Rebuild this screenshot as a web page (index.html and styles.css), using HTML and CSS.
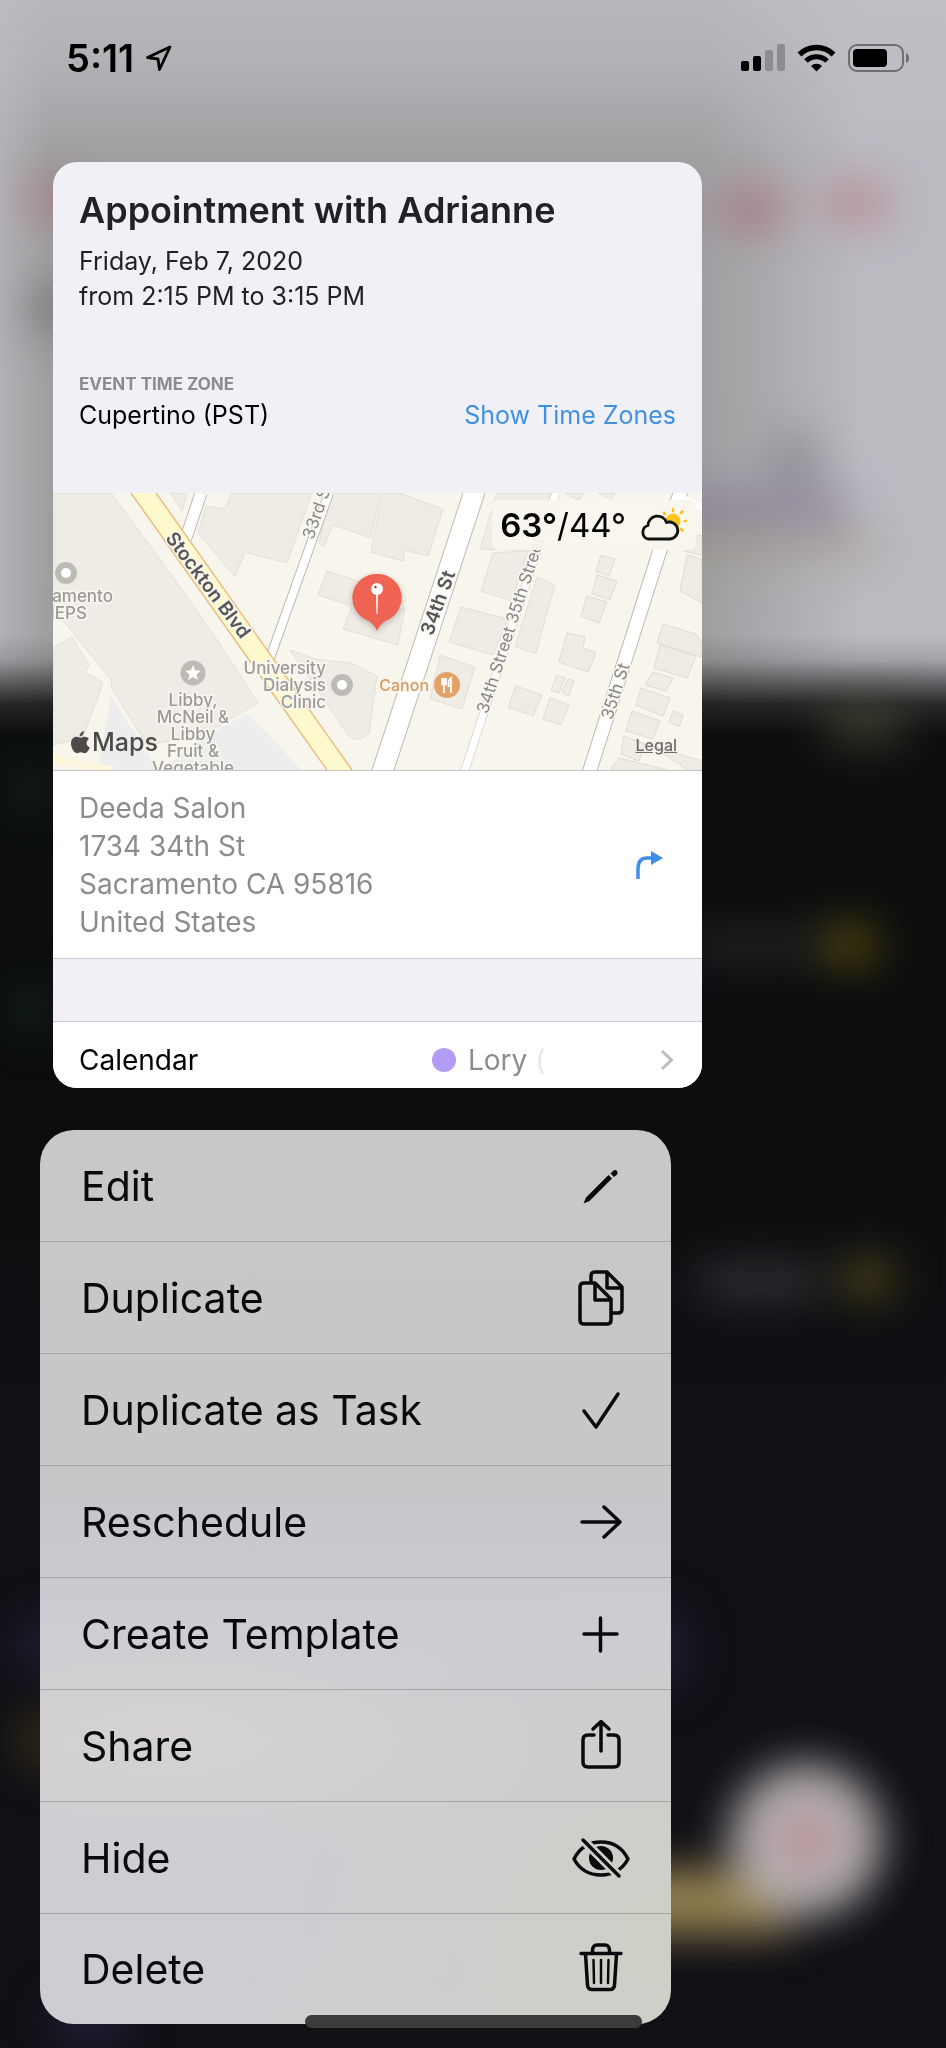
FILE: index.html
```html
<!DOCTYPE html>
<html lang="en">
<head>
    <meta charset="UTF-8">
    <meta name="viewport" content="width=device-width, initial-scale=1.0">
    <title>Appointment with Adrianne</title>
    <link rel="stylesheet" href="styles.css">
</head>
<body>
    <!-- blurred calendar behind the sheet -->
    <svg class="backdrop" viewBox="0 0 946 2048" preserveAspectRatio="xMidYMin slice" aria-hidden="true">
        <filter id="soft" x="-200" y="-200" width="1346" height="2448" filterUnits="userSpaceOnUse" color-interpolation-filters="sRGB">
            <feGaussianBlur stdDeviation="22"/>
        </filter>
        <g filter="url(#soft)">
            <ellipse cx="58" cy="200" rx="34" ry="22" fill="#a8505a" opacity="0.4"/>
            <ellipse cx="753" cy="209" rx="34" ry="24" fill="#a4414e" opacity="0.42"/>
            <ellipse cx="857" cy="203" rx="36" ry="24" fill="#b0455a" opacity="0.36"/>
            <ellipse cx="55" cy="308" rx="26" ry="26" fill="#4a4a4c" opacity="0.5"/>
            <ellipse cx="795" cy="460" rx="28" ry="28" fill="#66656c" opacity="0.45"/>
            <rect x="600" y="492" width="250" height="34" fill="#7d6c90" opacity="0.6"/>
            <rect x="600" y="534" width="280" height="26" fill="#9c9074" opacity="0.5"/>
            <ellipse cx="865" cy="722" rx="44" ry="22" fill="#4a4836" opacity="0.8"/>
            <rect x="690" y="936" width="130" height="20" fill="#3c3c40" opacity="0.7"/>
            <ellipse cx="850" cy="945" rx="30" ry="22" fill="#5c5010" opacity="0.9"/>
            <rect x="700" y="1268" width="120" height="28" fill="#4c4c50" opacity="0.7"/>
            <ellipse cx="868" cy="1278" rx="28" ry="20" fill="#58501a" opacity="0.9"/>
            <ellipse cx="30" cy="790" rx="20" ry="20" fill="#143225" opacity="0.6"/>
            <ellipse cx="30" cy="1010" rx="20" ry="26" fill="#143225" opacity="0.6"/>
            <ellipse cx="45" cy="1645" rx="26" ry="26" fill="#2a2446" opacity="0.8"/>
            <ellipse cx="45" cy="1740" rx="24" ry="26" fill="#4a3e1a" opacity="0.8"/>
            <ellipse cx="90" cy="2020" rx="40" ry="20" fill="#2d2850" opacity="0.8"/>
            <ellipse cx="664" cy="1650" rx="24" ry="40" fill="#26223e" opacity="0.8"/>
            <rect x="500" y="1870" width="290" height="64" fill="#978452"/>
            <circle cx="806" cy="1840" r="76" fill="#b4afb2"/>
            <circle cx="806" cy="1840" r="24" fill="#c8606a" opacity="0.5"/>
        </g>
    </svg>

    <header class="status-bar">
        <div class="status-time">
            <span>5:11</span>
            <svg width="28" height="28" viewBox="0 0 28 28" aria-hidden="true">
                <path d="M25 3 L2.500 13.500 L13 15 L14.500 25.500 Z" fill="none" stroke="#000" stroke-width="2.800" stroke-linejoin="round"/>
            </svg>
        </div>
        <div class="status-icons">
            <svg width="44" height="28" viewBox="0 0 44 28" aria-hidden="true">
                <rect x="0" y="17" width="8" height="10" rx="2"/>
                <rect x="12" y="12" width="8" height="15" rx="2"/>
                <rect x="24" y="6" width="8" height="21" rx="2" fill="#8d8c91"/>
                <rect x="36" y="0" width="8" height="27" rx="2" fill="#8d8c91"/>
            </svg>
            <svg width="39" height="28" viewBox="0 0 39 28" aria-hidden="true">
                <path d="M2.500 10.500 A24 24 0 0 1 36.500 10.500" fill="none" stroke="#000" stroke-width="5.500"/>
                <path d="M9 17 A15 15 0 0 1 30 17" fill="none" stroke="#000" stroke-width="5"/>
                <path d="M19.500 27.500 L14 22 A8 8 0 0 1 25 22 Z"/>
            </svg>
            <svg width="62" height="28" viewBox="0 0 62 28" aria-hidden="true">
                <rect x="1" y="1" width="54" height="26" rx="8" fill="none" stroke="#6f6e73" stroke-width="2"/>
                <rect x="5" y="5" width="34" height="18" rx="4"/>
                <path d="M58 9 Q61 10 61 14 T58 19 Z" fill="#6f6e73"/>
            </svg>
        </div>
    </header>

    <main>
        <article class="event-card">
            <section class="event-head">
                <h1>Appointment with Adrianne</h1>
                <p class="event-date">Friday, Feb 7, 2020<br>from 2:15 PM to 3:15 PM</p>
                <h2>EVENT TIME ZONE</h2>
                <div class="zone-row">
                    <span>Cupertino (PST)</span>
                    <a href="#zones">Show Time Zones</a>
                </div>
            </section>

            <section class="map">
                <svg class="map-art" viewBox="0 0 649 277" preserveAspectRatio="xMidYMid slice">
                    <rect width="649" height="277" fill="#f8f5ed"/>

                    <!-- city blocks -->
                    <g fill="#efece5" stroke="#e3e0d8" stroke-width="1">
                        <path d="M0 0 H58 L120 84 L167 151 L205 210 L150 242 L94 252 L58 194 L59 188 L12 130 L0 116 Z"/>
                        <path d="M0 155 L19 144 L36 172 L32 179 L50 190 L30 244 L0 252 Z"/>
                        <path d="M117 0 H134 L129 18 Z"/>
                        <path d="M178 0 L172 16 L153 13 L145 40 L164 62 L182 84 L192 59 L234 70 L259 0 Z"/>
                        <path d="M277 0 H327 L318 45 L280 32 L271 53 L266 50 Z"/>
                        <path d="M274 78 L324 94 L314 118 L265 102 Z"/>
                        <path d="M299 113 L330 124 L352 114 L345 152 L290 136 Z"/>
                        <path d="M329 0 H346 L390 16 L375 63 L352 57 L350 68 L318 59 Z"/>
                        <path d="M237 157 L262 166 L298 170 L324 183 L316 240 Q305 252 295 242 Z"/>
                        <path d="M444 0 H498 L478 58 L427 56 Z"/>
                        <path d="M440 60 L475 58 L459 108 L428 98 Z"/>
                        <path d="M408 114 L455 126 L440 162 L396 149 Z"/>
                        <path d="M387 162 L422 174 L409 216 L377 206 Z"/>
                        <path d="M484 84 L502 92 L490 134 L483 160 L462 154 Z"/>
                    </g>
                    <g fill="#efece5" stroke="#dfdcd3" stroke-width="1">
                        <path d="M548 62 L562 66 L556 83 L543 78 Z"/>
                        <path d="M544 82 L564 88 L557 107 L539 101 Z"/>
                        <path d="M534 103 L554 109 L546 130 L528 123 Z"/>
                        <path d="M514 140 L532 144 L530 155 L543 160 L535 179 L506 169 Z"/>
                        <path d="M504 182 L512 185 L506 200 L498 197 Z"/>
                        <path d="M515 186 L521 188 L516 203 L509 200 Z"/>
                        <path d="M463 193 L489 202 L480 223 L455 214 Z"/>
                        <path d="M497 205 L516 212 L508 232 L490 226 Z"/>
                        <path d="M610 131 L643 141 L649 150 V164 L604 150 Z"/>
                        <path d="M607 152 L643 163 L634 185 L601 175 Z"/>
                        <path d="M600 179 L620 185 L613 198 L592 192 Z"/>
                        <path d="M588 195 L617 205 L610 223 L583 212 Z"/>
                        <path d="M579 218 L607 228 L600 246 L573 238 Z"/>
                        <path d="M620 218 L630 222 L626 234 L616 229 Z"/>
                        <path d="M571 243 L592 251 L586 268 L568 261 Z"/>
                        <path d="M566 265 L615 277 H557 Z"/>
                        <path d="M597 252 L649 268 V277 H635 Z"/>
                        <path d="M645 42 L649 43 V62 L631 58 Z"/>
                        <path d="M634 62 L649 66 V110 L627 98 Z"/>
                        <path d="M512 0 H530 L526 7 Z"/>
                        <path d="M545 0 H562 L558 6 Z"/>
                    </g>
                    <path d="M58 203 L88 250 L105 277 H45 Z M140 250 L194 221 L215 240 L248 277 H110 Z" fill="#eeedee"/>
                    <path d="M0 266 L30 272 L60 277" stroke="#fbf6dc" stroke-width="8" fill="none"/>

                    <!-- streets -->
                    <g stroke="#bdbab5">
                        <path d="M127 55 L134 42 L148 0" stroke-width="13"/>
                        <path d="M217 165 L276 0" stroke-width="10"/>
                        <path d="M329 280 L422 -3" stroke-width="22"/>
                        <path d="M536 280 L607 57 L629 -5" stroke-width="15"/>
                    </g>
                    <path d="M411 280 L503 0" stroke="#dedbd4" stroke-width="9"/>
                    <path d="M411 280 L503 0" stroke="#fff" stroke-width="7"/>
                    <g stroke="#fff">
                        <path d="M127 57 L134 42 L148 0" stroke-width="11"/>
                        <path d="M217 165 L276 0" stroke-width="8"/>
                        <path d="M329 280 L422 -3" stroke-width="20"/>
                        <path d="M536 280 L607 57 L629 -5" stroke-width="13"/>
                        <path d="M629 6 L649 14" stroke-width="8"/>
                    </g>
                    <path d="M78 0 H103 L299 277 H274 Z" fill="#fdf9cc"/>
                    <path d="M78 0 L274 277 M103 0 L299 277" stroke="#e9bd86" stroke-width="1.500"/>

                    <!-- street names -->
                    <g class="street major">
                        <text transform="translate(150 96) rotate(53)">Stockton Blvd</text>
                        <text transform="translate(391 112) rotate(-70)">34th St</text>
                    </g>
                    <g class="street">
                        <text transform="translate(269 22) rotate(-71)">33rd S</text>
                        <text transform="translate(463 134) rotate(-72)">34th Street 35th Street</text>
                        <text transform="translate(568 200) rotate(-72)">35th St</text>
                    </g>

                    <!-- places -->
                    <g class="poi end">
                        <text x="60" y="109">Sacramento</text>
                        <text x="34" y="126">MEPS</text>
                        <text x="273" y="181">University</text>
                        <text x="273" y="198">Dialysis</text>
                        <text x="273" y="215">Clinic</text>
                    </g>
                    <g class="poi middle">
                        <text x="140" y="213">Libby,</text>
                        <text x="140" y="230">McNeil &amp;</text>
                        <text x="140" y="247">Libby</text>
                        <text x="140" y="264">Fruit &amp;</text>
                        <text x="140" y="281">Vegetable</text>
                    </g>
                    <g class="poi end food">
                        <text x="376" y="198">Canon</text>
                    </g>
                    <g fill="#fff" stroke="#bebbb6" stroke-width="6">
                        <circle cx="13" cy="80" r="8"/>
                        <circle cx="289" cy="192" r="8"/>
                    </g>
                    <circle cx="140" cy="180" r="12.500" fill="#bebbb6"/>
                    <path d="M140 172 L142.200 177.300 L147.800 177.700 L143.500 181.400 L144.800 187 L140 184 L135.200 187 L136.500 181.400 L132.200 177.700 L137.800 177.300 Z" fill="#fff"/>
                    <circle cx="394" cy="192" r="13" fill="#e4a268"/>
                    <path d="M389 185 V190 Q389 192 391 192 T393 190 V185 M391 185 V200 M398 200 V185 Q395 187 395.500 193 H398" fill="none" stroke="#fff" stroke-width="1.800"/>

                    <!-- dropped pin -->
                    <path class="pin" d="M324 81 A24 24 0 0 1 333 127.500 Q327 131 324 138 Q321 131 315 127.500 A24 24 0 0 1 324 81 Z"/>
                    <circle cx="324" cy="96" r="6" fill="#fff"/>
                    <path d="M323 101 H325 L324.500 121 H323.500 Z" fill="#fff"/>
                    <circle cx="322.500" cy="94" r="1.200" fill="#a33"/>
                </svg>

                <div class="weather">
                    <span><b>63°</b>/44°</span>
                    <svg width="48" height="36" viewBox="0 0 48 36" aria-hidden="true">
                        <g stroke="#f8c61c" stroke-width="2.600" stroke-linecap="round">
                            <path d="M33 2 V4 M24 6 L25 7 M41 6 L42.500 4.500 M44.500 14 H46 M41 22 L42.500 23.500"/>
                        </g>
                        <circle cx="33" cy="14" r="7.500" fill="#f8c61c"/>
                        <path d="M8 32 A7 7 0 0 1 8 18.500 A9.500 9.500 0 0 1 26.500 15.500 A8.500 8.500 0 1 1 30 32 Z" fill="#f8f5ed" stroke="#111" stroke-width="2.800" stroke-linejoin="round"/>
                    </svg>
                </div>
                <div class="map-brand">
                    <svg width="19" height="23" viewBox="0 0 19 23" aria-hidden="true">
                        <path d="M13 0 C13 3 11 5.500 8.700 5.400 C8.500 3 10.600 .500 13 0 Z M9.500 6.800 C10.800 6.800 11.700 5.700 13.600 5.700 C15.500 5.700 17 6.600 17.900 8 C14.500 10 15 15 18.800 16.300 C17.800 19.200 15.900 22.200 13.900 22.200 C12.300 22.200 11.800 21.300 9.900 21.300 C8 21.300 7.300 22.200 5.900 22.200 C3.300 22.200 0 17 0 12.600 C0 8.300 2.700 5.800 5.400 5.800 C7.200 5.800 8.400 6.800 9.500 6.800 Z" fill="#4c4b49"/>
                    </svg>
                    <span>Maps</span>
                </div>
                <a class="legal" href="#legal">Legal</a>
            </section>

            <section class="location">
                <address>
                    Deeda Salon<br>
                    1734 34th St<br>
                    Sacramento CA 95816<br>
                    United States
                </address>
                <button class="directions" type="button" aria-label="Directions">
                    <svg width="28" height="30" viewBox="0 0 28 30" aria-hidden="true">
                        <path d="M3 29 V19 Q3 8 12 8 H17" fill="none" stroke="#3f8fe8" stroke-width="3.500"/>
                        <path d="M16 1 L28 8 L16 15 Z" fill="#3f8fe8"/>
                    </svg>
                </button>
            </section>

            <a class="calendar-row" href="#calendar">
                <span>Calendar</span>
                <span class="calendar-value">
                    <i class="dot"></i>
                    <span>Lory <span class="faded">(</span></span>
                </span>
                <svg width="14" height="22" viewBox="0 0 14 22" aria-hidden="true">
                    <path d="M2 2 L11.500 11 L2 20" fill="none" stroke="#bdbdc1" stroke-width="3"/>
                </svg>
            </a>
        </article>

        <nav class="menu">
            <button type="button">
                <span>Edit</span>
                <svg viewBox="0 0 60 60" aria-hidden="true">
                    <g fill="#0a0a0c">
                        <path d="M12.500 47.500 L15 41.500 L37.500 19 L41 22.500 L18.500 45 Z"/>
                        <path d="M39.500 17.500 L42.500 14.500 Q44.500 13.500 46 15 T46 18.500 L43 21 Z"/>
                    </g>
                </svg>
            </button>
            <button type="button">
                <span>Duplicate</span>
                <svg viewBox="0 0 60 60" aria-hidden="true">
                    <g class="line">
                        <path d="M13 15 H24 L40 31 V52 Q40 56 36 56 H13 Q9 56 9 52 V19 Q9 15 13 15 Z M24 15 V32 H40"/>
                        <path d="M20 14 V8 Q20 4 24 4 H36 L51 19 V41 Q51 45 47 45 H41 M36 4 V20 H51"/>
                    </g>
                </svg>
            </button>
            <button type="button">
                <span>Duplicate as Task</span>
                <svg viewBox="0 0 60 60" aria-hidden="true">
                    <path class="line" d="M13 31 L25 47 L47 14"/>
                </svg>
            </button>
            <button type="button">
                <span>Reschedule</span>
                <svg viewBox="0 0 60 60" aria-hidden="true">
                    <path class="line" d="M11 30 H49 M33 15 L49 30 L33 45"/>
                </svg>
            </button>
            <button type="button">
                <span>Create Template</span>
                <svg viewBox="0 0 60 60" aria-hidden="true">
                    <path class="line" d="M13 30 H46 M29.500 14 V47"/>
                </svg>
            </button>
            <button type="button">
                <span>Share</span>
                <svg viewBox="0 0 60 60" aria-hidden="true">
                    <path class="line" d="M23 19 H17 Q12 19 12 24 V46 Q12 51 17 51 H43 Q48 51 48 46 V24 Q48 19 43 19 H37 M30 35 V6 M22 13 L30 5.500 L38 13"/>
                </svg>
            </button>
            <button type="button">
                <span>Hide</span>
                <svg viewBox="0 0 60 60" aria-hidden="true">
                    <mask id="slash">
                        <rect width="60" height="60" fill="#fff"/>
                        <path d="M7 7 L53 53" stroke="#000" stroke-width="9"/>
                    </mask>
                    <g mask="url(#slash)">
                        <path class="line" d="M3 31 C9 19 19 14 30 14 S51 19 57 31 C51 42 41 47 30 47 S9 42 3 31 Z"/>
                        <circle cx="30" cy="30" r="12" fill="#0a0a0c"/>
                    </g>
                    <path class="line" d="M12 12 L48 48"/>
                </svg>
            </button>
            <button type="button">
                <span>Delete</span>
                <svg viewBox="0 0 60 60" aria-hidden="true">
                    <g class="line">
                        <path d="M10 14.500 H50 M21.500 14 V11 Q22 6 26 6 H34 Q38 6 38.500 11 V14"/>
                        <path d="M14.500 15 L16.500 46 Q17 50.500 21 50.500 H39 Q43 50.500 43.500 46 L45.500 15"/>
                    </g>
                    <path class="line thin" d="M22.500 21 L23 44 M30 21 V44 M37.500 21 L37 44"/>
                </svg>
            </button>
        </nav>
    </main>

    <div class="home-indicator"></div>
</body>
</html>
```
FILE: styles.css
```css
* {
    box-sizing: border-box;
}

body {
    position: relative;
    margin: 0;
    min-height: 100vh;
    padding-bottom: 24px;
    font-family: Inter, "Liberation Sans", Arial, sans-serif;
    color: #000;
    background:
        linear-gradient(transparent 635px, rgba(14, 16, 16, 0.14) 660px, rgba(14, 16, 16, 0.5) 682px, rgba(14, 16, 16, 0.86) 704px, #0d0f0f 735px, #0c0d0e 1100px, #111015 1400px, #111015),
        linear-gradient(90deg, rgba(190, 189, 195, 0.6), transparent 50px, transparent 74%, rgba(192, 191, 198, 0.85) 91%),
        linear-gradient(#b8b7bc, #b2b1b6 60px, #9f9fa1 160px, #9c9c9f 100%);
}

.backdrop {
    position: absolute;
    inset: 0;
    z-index: -1;
    width: 100%;
    height: 100%;
}

.status-bar {
    display: flex;
    justify-content: space-between;
    padding: 32px 36px 0 66px;
    height: 162px;
}

.status-time,
.status-icons {
    display: flex;
    align-items: center;
    height: 52px;
}

.status-time {
    gap: 11px;
    font-size: 38px;
    font-weight: 600;
}

.status-icons {
    gap: 12px;
}

/* Event preview */
.event-card {
    margin: 0 244px 42px 53px;
    border-radius: 24px;
    overflow: hidden;
    background: #f1f0f7;
}

.event-head {
    padding: 26px 26px 60px;
}

h1,
h2,
p {
    margin: 0;
}

h1 {
    font-size: 36px;
    font-weight: 600;
    line-height: 44px;
    color: #222226;
}

.event-date {
    margin-top: 12px;
    font-size: 25px;
    line-height: 35px;
    color: #222226;
}

h2 {
    margin: 60px 0 4px;
    font-size: 17px;
    font-weight: 700;
    line-height: 20px;
    color: #8b8b91;
}

.zone-row {
    display: flex;
    justify-content: space-between;
    font-size: 25px;
    line-height: 35px;
}

.zone-row a {
    color: #4191de;
    text-decoration: none;
}

.map {
    position: relative;
    height: 277px;
    overflow: hidden;
}

.map-art {
    display: block;
    width: 100%;
    height: 100%;
}

.map-art text {
    paint-order: stroke;
    stroke: #f9f6ef;
    stroke-width: 3px;
}

.street {
    font-size: 17px;
    fill: #85858a;
    text-anchor: middle;
}

.street.major {
    font-size: 19px;
    font-weight: 600;
    fill: #56565a;
}

.poi {
    font-size: 17px;
    font-weight: 500;
    fill: #9b9a98;
}

.poi.end {
    text-anchor: end;
}

.poi.middle {
    text-anchor: middle;
}

.poi.food {
    font-size: 16px;
    fill: #d99a62;
}

.pin {
    fill: #ee6352;
    filter: drop-shadow(0 2px 3px rgba(0, 0, 0, 0.25));
}

.weather {
    position: absolute;
    top: 7px;
    right: 6px;
    display: flex;
    align-items: center;
    gap: 14px;
    height: 50px;
    padding: 0 8px;
    border-radius: 6px;
    background: rgba(248, 245, 237, 0.92);
    font-size: 33px;
}

.weather b {
    font-weight: 600;
}

.map-brand {
    position: absolute;
    left: 18px;
    bottom: 12px;
    display: flex;
    align-items: center;
    gap: 2px;
    font-size: 25px;
    font-weight: 500;
    line-height: 32px;
    color: #4c4b49;
}

.legal {
    position: absolute;
    right: 25px;
    bottom: 15px;
    font-size: 16px;
    font-weight: 500;
    line-height: 20px;
    color: #6d6c6b;
}

.location {
    display: flex;
    align-items: center;
    justify-content: space-between;
    padding: 18px 39px 17px 26px;
    border-top: 1px solid #c6c5c9;
    border-bottom: 1px solid #c9c8cd;
    background: #fff;
}

address {
    font-size: 28px;
    font-style: normal;
    line-height: 38px;
    color: #8c8c8f;
}

.directions {
    display: flex;
    padding: 0;
    border: 0;
    background: none;
}

.calendar-row {
    display: flex;
    align-items: center;
    margin-top: 62px;
    height: 67px;
    padding: 9px 28px 0 26px;
    border-top: 1px solid #c9c8cd;
    background: #fff;
    font-size: 28px;
    color: #000;
    text-decoration: none;
}

.calendar-value {
    display: flex;
    align-items: center;
    gap: 12px;
    width: 228px;
    margin-left: auto;
    color: #8c8c8f;
}

.dot {
    width: 24px;
    height: 24px;
    border-radius: 50%;
    background: #b39cf6;
}

.faded {
    opacity: 0.2;
}

/* Context menu */
.menu {
    display: flex;
    flex-direction: column;
    margin: 0 275px 0 40px;
    border-radius: 34px;
    overflow: hidden;
    background:
        radial-gradient(ellipse 70% 40% at 100% 90%, #cfcfc6, transparent),
        radial-gradient(ellipse 60% 15% at 20% 68%, #d5d2d1, transparent),
        linear-gradient(#c8c7ca, #c7c6c9 40%, #cecbd3 56%, #cfccd4 90%, #cfcdd1);
}

.menu button {
    display: flex;
    align-items: center;
    justify-content: space-between;
    height: 112px;
    padding: 0 40px 0 41px;
    border: 0;
    border-bottom: 1px solid #a5a4a8;
    background: none;
    font: inherit;
    font-size: 41px;
    color: #0a0a0c;
}

.menu button:last-child {
    height: 110px;
    border-bottom: 0;
}

.menu svg {
    width: 60px;
    height: 60px;
}

.line {
    fill: none;
    stroke: #0a0a0c;
    stroke-width: 3.5;
    stroke-linecap: round;
    stroke-linejoin: round;
}

.line.thin {
    stroke-width: 2.5;
}

.home-indicator {
    position: fixed;
    left: 0;
    right: 0;
    bottom: 20px;
    width: 337px;
    height: 13px;
    margin: 0 auto;
    border-radius: 7px;
    background: #3b3b3c;
}

@media (max-width: 760px) {
    .event-card,
    .menu {
        margin-left: 24px;
        margin-right: 24px;
    }
}
```
